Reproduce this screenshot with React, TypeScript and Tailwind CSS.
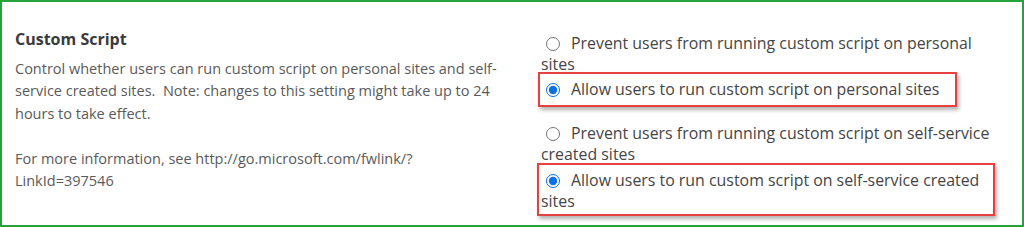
export default function App() {
  const font = "font-['Open_Sans','Noto_Sans',sans-serif]";
  const radio = "ml-[5px] mr-[11px] h-[14px] w-[14px] align-[-2px] accent-[#0b6fe6]";

  return (
    <div className={`h-[227px] w-full border-2 border-[#25a23a] bg-white ${font}`}>
      <div className="flex">
        {/* left column: section title + description */}
        <div className="w-[539px] shrink-0 pl-[13px] pt-[26px]">
          <h2 className="text-[16px] font-bold leading-[22px] text-[#3b3b3b]">Custom Script</h2>
          <p className="mt-[8px] w-[505px] text-[14.5px] leading-[22.4px] text-[#5a5a5a]">
            Control whether users can run custom script on personal sites and self-service created sites.&nbsp; Note: changes to this setting might take up to 24 hours to take effect.
            <br />
            <br />
            For more information, see http://go.microsoft.com/fwlink/?
            <br />
            LinkId=397546
          </p>
        </div>

        {/* right column: radio options */}
        <div className="w-[458px] shrink-0 pt-[31px] text-[15.9px] leading-[21px] text-[#454545]">
          <div>
            <input type="radio" name="personal" className={radio} />
            Prevent users from running custom script on personal sites
          </div>

          <div className="-ml-[3px] mt-[-3px] w-[419px] border-2 border-[#e8403f] pb-[5px] pl-px pt-[5px] shadow-[2px_3px_4px_rgba(0,0,0,0.3)]">
            <input type="radio" name="personal" defaultChecked className={radio} />
            Allow users to run custom script on personal sites
          </div>

          <div className="mt-[16px]">
            <input type="radio" name="selfservice" className={radio} />
            Prevent users from running custom script on self-service created sites
          </div>

          <div className="-ml-[4px] mt-[-2px] w-[458px] border-2 border-[#e8403f] pb-[2px] pl-[2px] pt-[5px] shadow-[2px_3px_4px_rgba(0,0,0,0.3)]">
            <input type="radio" name="selfservice" defaultChecked className={radio} />
            Allow users to run custom script on self-service created sites
          </div>
        </div>
      </div>
    </div>
  );
}
